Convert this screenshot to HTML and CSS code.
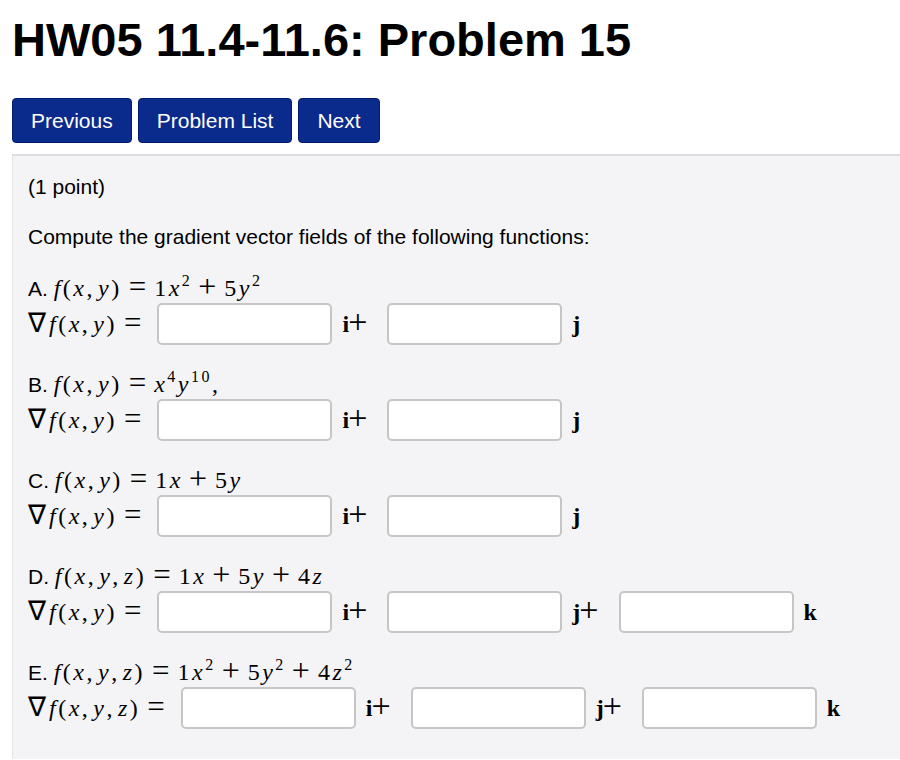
FILE: index.html
```html
<!DOCTYPE html>
<html lang="en">
<head>
    <meta charset="UTF-8">
    <meta name="viewport" content="width=device-width, initial-scale=1.0">
    <title>HW05 11.4-11.6: Problem 15</title>
    <link rel="stylesheet" href="styles.css">
</head>
<body>
    <h1 class="title">HW05 11.4-11.6: Problem 15</h1>

    <div class="nav">
        <button class="nav-btn">Previous</button>
        <button class="nav-btn">Problem List</button>
        <button class="nav-btn">Next</button>
    </div>

    <div class="problem">
        <p class="points">(1 point)</p>
        <p class="intro">Compute the gradient vector fields of the following functions:</p>

        <!-- A -->
        <div class="part">
            <div class="fn">A. <span class="math"><i>f</i>(<i>x</i><span class="comma">,</span><i>y</i>)<span class="rel">=</span>1<i>x</i><sup>2</sup><span class="op">+</span>5<i>y</i><sup>2</sup></span></div>
            <div class="answer">
                <span class="math"><span class="nabla">∇</span><i>f</i>(<i>x</i><span class="comma">,</span><i>y</i>)<span class="rel end">=</span></span>
                <input class="box" type="text">
                <span class="math unit"><b>i</b><span class="plus">+</span></span>
                <input class="box" type="text">
                <span class="math unit"><b>j</b></span>
            </div>
        </div>

        <!-- B -->
        <div class="part">
            <div class="fn">B. <span class="math"><i>f</i>(<i>x</i><span class="comma">,</span><i>y</i>)<span class="rel">=</span><i>x</i><sup>4</sup><i>y</i><sup>10</sup>,</span></div>
            <div class="answer">
                <span class="math"><span class="nabla">∇</span><i>f</i>(<i>x</i><span class="comma">,</span><i>y</i>)<span class="rel end">=</span></span>
                <input class="box" type="text">
                <span class="math unit"><b>i</b><span class="plus">+</span></span>
                <input class="box" type="text">
                <span class="math unit"><b>j</b></span>
            </div>
        </div>

        <!-- C -->
        <div class="part">
            <div class="fn">C. <span class="math"><i>f</i>(<i>x</i><span class="comma">,</span><i>y</i>)<span class="rel">=</span>1<i>x</i><span class="op">+</span>5<i>y</i></span></div>
            <div class="answer">
                <span class="math"><span class="nabla">∇</span><i>f</i>(<i>x</i><span class="comma">,</span><i>y</i>)<span class="rel end">=</span></span>
                <input class="box" type="text">
                <span class="math unit"><b>i</b><span class="plus">+</span></span>
                <input class="box" type="text">
                <span class="math unit"><b>j</b></span>
            </div>
        </div>

        <!-- D -->
        <div class="part">
            <div class="fn">D. <span class="math"><i>f</i>(<i>x</i><span class="comma">,</span><i>y</i><span class="comma">,</span><i>z</i>)<span class="rel">=</span>1<i>x</i><span class="op">+</span>5<i>y</i><span class="op">+</span>4<i>z</i></span></div>
            <div class="answer">
                <span class="math"><span class="nabla">∇</span><i>f</i>(<i>x</i><span class="comma">,</span><i>y</i>)<span class="rel end">=</span></span>
                <input class="box" type="text">
                <span class="math unit"><b>i</b><span class="plus">+</span></span>
                <input class="box" type="text">
                <span class="math unit"><b>j</b><span class="plus">+</span></span>
                <input class="box" type="text">
                <span class="math unit"><b>k</b></span>
            </div>
        </div>

        <!-- E -->
        <div class="part">
            <div class="fn">E. <span class="math"><i>f</i>(<i>x</i><span class="comma">,</span><i>y</i><span class="comma">,</span><i>z</i>)<span class="rel">=</span>1<i>x</i><sup>2</sup><span class="op">+</span>5<i>y</i><sup>2</sup><span class="op">+</span>4<i>z</i><sup>2</sup></span></div>
            <div class="answer">
                <span class="math"><span class="nabla">∇</span><i>f</i>(<i>x</i><span class="comma">,</span><i>y</i><span class="comma">,</span><i>z</i>)<span class="rel end">=</span></span>
                <input class="box" type="text">
                <span class="math unit"><b>i</b><span class="plus">+</span></span>
                <input class="box" type="text">
                <span class="math unit"><b>j</b><span class="plus">+</span></span>
                <input class="box" type="text">
                <span class="math unit"><b>k</b></span>
            </div>
        </div>
    </div>
</body>
</html>
```

FILE: styles.css
```css
body {
    margin: 0;
    padding: 0 0 0 12px;
    font-family: 'Liberation Sans', Arial, sans-serif;
    font-size: 21px;
    color: #000;
    background-color: #fff;
    overflow: hidden;
}

.title {
    margin: 12px 0 0;
    font-size: 47px;
    line-height: 56px;
    font-weight: bold;
}

.nav {
    display: flex;
    gap: 6px;
    margin-top: 30px;
}

.nav-btn {
    height: 45px;
    padding: 0 18px;
    font-family: 'Liberation Sans', Arial, sans-serif;
    font-size: 21px;
    color: #fff;
    background-color: #0a2a8c;
    border: 1px solid #001c6a;
    border-radius: 4px;
    cursor: pointer;
}

.problem {
    margin-top: 11px;
    padding: 18px 0 30px 15px;
    background-color: #f4f4f6;
    border-top: 2px solid #dcdcdc;
    border-left: 1px solid #e4e4e4;
}

.points,
.intro {
    margin: 0;
    line-height: 26px;
}

.points {
    margin-bottom: 24px;
}

.intro {
    margin-bottom: 26px;
}

.part {
    margin-bottom: 27px;
}

.part:last-child {
    margin-bottom: 0;
}

.fn {
    height: 26px;
    line-height: 26px;
    white-space: nowrap;
}

.answer {
    display: flex;
    align-items: center;
    margin-top: 1px;
}

.math {
    font-family: 'Liberation Serif', 'Times New Roman', serif;
    font-size: 24px;
    line-height: 1;
    letter-spacing: 2.5px;
}

.math i {
    font-style: italic;
}

.math sup {
    font-size: 16px;
    line-height: 0;
    vertical-align: 10px;
}

.math b {
    font-weight: bold;
}

.nabla {
    font-size: 27px;
    line-height: 0;
    letter-spacing: 0;
    margin-right: 3px;
}

.rel,
.op,
.plus {
    font-size: 31px;
    line-height: 0;
    vertical-align: -1px;
    letter-spacing: 0;
}

.rel {
    margin: 0 8px 0 7px;
}

.rel.end {
    margin-right: 0;
}

.op {
    font-size: 32px;
    margin: 0 8px 0 6px;
}

.plus {
    font-size: 34px;
    margin-left: -1px;
}

.comma {
    margin-right: 3px;
}

.unit {
    white-space: nowrap;
    letter-spacing: 0;
}

.box {
    box-sizing: border-box;
    width: 175px;
    height: 42px;
    margin: 0 10px 0 12px;
    background-color: #fff;
    border: 2px solid #c6c6c6;
    border-radius: 5px;
}

.answer .math:first-child + .box {
    margin-left: 16px;
}

.unit + .box {
    margin-left: 20px;
}
```
